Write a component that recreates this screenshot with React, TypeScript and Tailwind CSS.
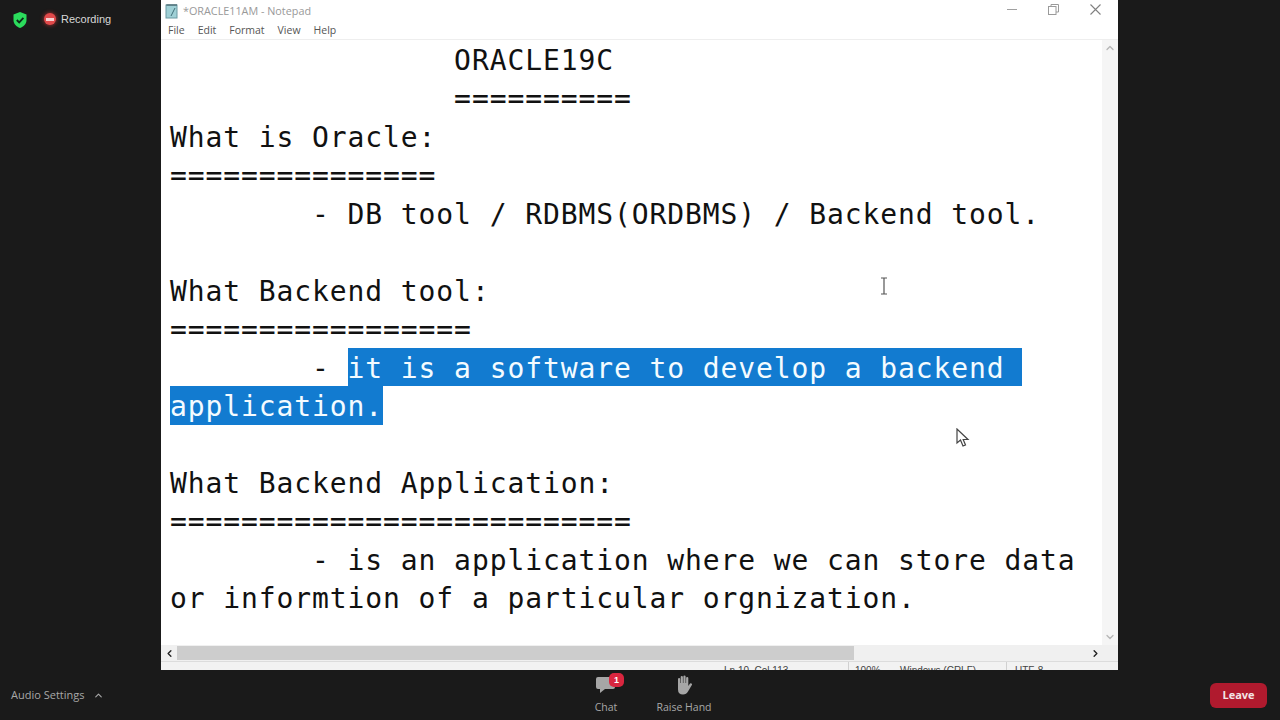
import React from "react";
import { ChevronUp, ChevronDown, ChevronLeft, ChevronRight } from "lucide-react";

const Line = ({ children }: { children?: React.ReactNode }) => (
  <div className="h-[38.45px] leading-[42.45px] whitespace-pre">{children}</div>
);

const Selected = ({ children }: { children: React.ReactNode }) => (
  <span className="bg-[#127bd0] text-[#f4fbff] inline-block h-[38.6px]">{children}</span>
);

const menus = ["File", "Edit", "Format", "View", "Help"];

const App: React.FC = () => {
  return (
    <div className="relative w-[1280px] h-[720px] overflow-hidden flex flex-col bg-[#1a1a1a] font-['Liberation_Sans',sans-serif]">
      <div className="flex h-[670px]">
        {/* left strip */}
        <div className="w-[161px] shrink-0 flex items-start pl-[13px] pt-[11px]">
          <svg width="14" height="16" viewBox="0 0 14 16" className="mt-[1px]">
            <path d="M7 0 L13.5 2.4 V8 C13.5 12 10.5 14.6 7 16 C3.5 14.6 .5 12 .5 8 V2.4 Z" fill="#2bdc5c" />
            <path d="M3.8 8 L6.2 10.4 L10.4 5.8" fill="none" stroke="#0d2a18" strokeWidth="1.8" />
          </svg>
          <div className="ml-[17px] mt-[2px] w-[12px] h-[12px] rounded-full bg-[#e0494a] flex items-center justify-center shadow-[0_0_4px_#b33]">
            <div className="w-[8px] h-[3px] bg-[#f6d0d0]" />
          </div>
          <span className="ml-[5px] text-[11px] leading-[16px] text-[#d8d8d8]">Recording</span>
        </div>

        {/* notepad window */}
        <div className="w-[957px] shrink-0 bg-white flex flex-col">
          <div className="h-[22px] shrink-0 flex items-center pl-[4px] relative">
            <svg width="14" height="16" viewBox="0 0 14 16">
              <rect x="1" y="2" width="11" height="13" fill="#9fd0d6" stroke="#6a9aa3" />
              <path d="M1 2 h11 M3 1 v2 M5 1 v2 M7 1 v2 M9 1 v2 M11 1 v2" stroke="#52737a" fill="none" />
              <path d="M10 5 L6 13" stroke="#3f6f78" />
            </svg>
            <span className="ml-[4px] text-[10.8px] text-[#999999] font-['Open_Sans',sans-serif]">*ORACLE11AM - Notepad</span>
            <div className="ml-auto flex items-center mr-[17px] gap-[31px] -mt-[3px]">
              <div className="w-[10px] h-[1px] bg-[#a0a0a0]" />
              <svg width="11" height="11" viewBox="0 0 11 11" fill="none" stroke="#9a9a9a">
                <rect x=".5" y="2.5" width="7.5" height="8" />
                <path d="M3 2.5 V.5 H10.5 V8 H8" />
              </svg>
              <svg width="11" height="11" viewBox="0 0 11 11" stroke="#808080" strokeWidth="1.1">
                <path d="M.5 .5 L10.5 10.5 M10.5 .5 L.5 10.5" />
              </svg>
            </div>
          </div>
          <div className="h-[18px] shrink-0 flex items-center pl-[7px] gap-[13px] text-[10.5px] text-[#555] border-b border-[#eeeeee] font-['Open_Sans',sans-serif]">
            {menus.map((m) => (
              <span key={m}>{m}</span>
            ))}
          </div>

          <div className="flex-1 flex min-h-0">
            <div className="flex-1 pl-[9px] overflow-hidden text-[28px] text-[#111111] font-['DejaVu_Sans_Mono',monospace] tracking-[0.9px]">
              <Line>{"                ORACLE19C"}</Line>
              <Line>{"                =========="}</Line>
              <Line>What is Oracle:</Line>
              <Line>{"==============="}</Line>
              <Line>{"        - DB tool / RDBMS(ORDBMS) / Backend tool."}</Line>
              <Line />
              <Line>What Backend tool:</Line>
              <Line>{"================="}</Line>
              <Line>
                {"        - "}
                <Selected>{"it is a software to develop a backend "}</Selected>
              </Line>
              <Line>
                <Selected>application.</Selected>
              </Line>
              <Line />
              <Line>What Backend Application:</Line>
              <Line>{"=========================="}</Line>
              <Line>{"        - is an application where we can store data"}</Line>
              <Line>or informtion of a particular orgnization.</Line>
            </div>
            <div className="w-[16px] shrink-0 bg-[#f5f5f5] flex flex-col items-center justify-between py-[2px] text-[#b5b5b5]">
              <ChevronUp size={12} strokeWidth={2.5} />
              <ChevronDown size={12} strokeWidth={2.5} />
            </div>
          </div>

          <div className="h-[16px] shrink-0 bg-[#f0f0f0] flex items-center">
            <div className="w-[16px] flex justify-center text-[#222]">
              <ChevronLeft size={11} strokeWidth={3} />
            </div>
            <div className="w-[677px] h-[14px] bg-[#cdcdcd]" />
            <div className="flex-1" />
            <div className="w-[16px] mr-[15px] flex justify-center text-[#222]">
              <ChevronRight size={11} strokeWidth={3} />
            </div>
          </div>

          <div className="h-[9px] shrink-0 bg-[#f2f2f2] border-t border-[#dcdcdc] overflow-hidden flex text-[10px] leading-[18px] text-[#444]">
            <span className="ml-[563px] w-[124px]">Ln 10, Col 113</span>
            <span className="border-l border-[#d0d0d0] pl-[6px] w-[52px]">100%</span>
            <span className="w-[106px]">Windows (CRLF)</span>
            <span className="border-l border-[#d0d0d0] pl-[8px]">UTF-8</span>
          </div>
        </div>
        <div className="flex-1" />
      </div>

      {/* meeting toolbar */}
      <div className="flex-1 relative flex items-center">
        <div className="ml-[11px] flex items-center gap-[9px] text-[11px] text-[#a8a8a8] font-['Open_Sans',sans-serif]">
          <span>Audio Settings</span>
          <ChevronUp size={11} strokeWidth={2.5} />
        </div>
        <div className="absolute left-[594px] top-[5px] flex flex-col items-center w-[24px]">
          <svg width="20" height="20" viewBox="0 0 20 20">
            <path d="M2 2 H17 Q19 2 19 4 V12 Q19 14 17 14 H9 L4 18 V14 H2 Q0 14 0 12 V4 Q0 2 2 2 Z" fill="#a6a6a6" />
          </svg>
          <span className="text-[10.5px] leading-[14px] mt-[5px] text-[#a8a8a8] font-['Open_Sans',sans-serif]">Chat</span>
        </div>
        <div className="absolute left-[609px] top-[3px] w-[15px] h-[14px] rounded-[5px] bg-[#d9263f] text-white text-[9px] leading-[14px] text-center font-bold">
          1
        </div>
        <div className="absolute left-[654px] top-[5px] flex flex-col items-center w-[60px]">
          <svg width="18" height="20" viewBox="0 0 18 20" fill="#a6a6a6">
            <path d="M3 9 V4 a1.1 1.1 0 0 1 2.2 0 V8 h.5 V2 a1.1 1.1 0 0 1 2.2 0 V8 h.5 V1.5 a1.1 1.1 0 0 1 2.2 0 V8 h.5 V3 a1.1 1.1 0 0 1 2.2 0 V11 L15 8.6 a1.2 1.2 0 0 1 2 1.2 L13 16.5 Q11.5 19.5 8 19.5 Q3 19.5 3 14.5 Z" />
          </svg>
          <span className="text-[10.5px] leading-[14px] mt-[5px] text-[#a8a8a8] font-['Open_Sans',sans-serif]">Raise Hand</span>
        </div>
        <div className="absolute left-[1210px] top-[13px] w-[57px] h-[25px] rounded-[6px] bg-[#b01a2e] text-[#f3e3e5] text-[11px] font-bold flex items-center justify-center font-['Open_Sans',sans-serif]">
          Leave
        </div>
      </div>

      {/* mouse cursors captured in the recording */}
      <svg className="absolute left-[879px] top-[277px]" width="10" height="18" viewBox="0 0 10 18" fill="none" stroke="#555" strokeWidth="1.2">
        <path d="M2 1 H8 M5 1 V17 M2 17 H8" />
      </svg>
      <svg className="absolute left-[956px] top-[428px]" width="14" height="20" viewBox="0 0 14 20" fill="#fff" stroke="#444" strokeWidth="1.2">
        <path d="M1 1 V15 L4.5 12 L7 18 L9.5 17 L7.2 11.5 H12 Z" />
      </svg>
    </div>
  );
};

export default App;
